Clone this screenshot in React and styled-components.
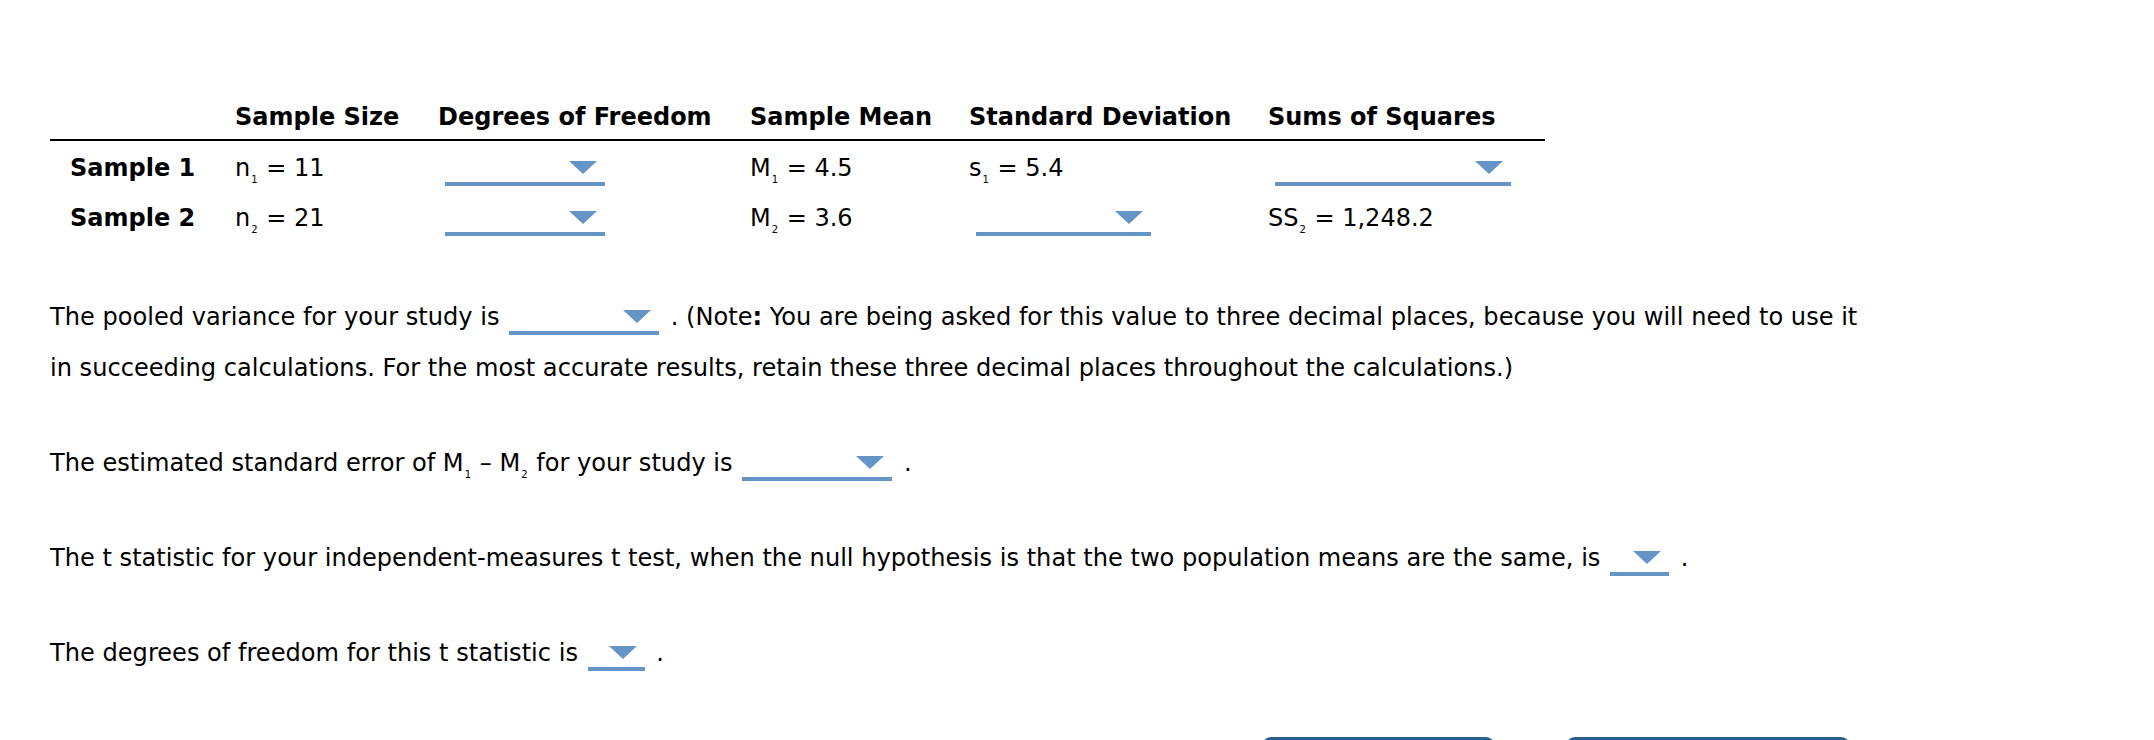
import React from "react";
import styled, { createGlobalStyle } from "styled-components";

const GlobalStyle = createGlobalStyle`
  html, body { margin: 0; padding: 0; background: #ffffff; }
  body {
    font-family: "DejaVu Sans", Verdana, sans-serif;
    font-size: 24px;
    color: #000000;
  }
`;

const Page = styled.div`
  width: 2154px;
  height: 740px;
  overflow: hidden;
  box-sizing: border-box;
  padding: 102px 0 0 50px;
`;

const Table = styled.div`
  display: grid;
  grid-template-columns: 185px 203px 312px 219px 299px 277px;
  width: 1495px;
`;

const HeadCell = styled.div`
  font-weight: bold;
  line-height: 30px;
  padding-bottom: 7px;
  border-bottom: 2px solid #000;
  margin-bottom: 2px;
  white-space: nowrap;
`;

const Cell = styled.div`
  height: 50px;
  display: flex;
  align-items: center;
  line-height: 30px;
  white-space: nowrap;
  font-weight: ${(p) => (p.$label ? "bold" : "normal")};
  padding-left: ${(p) => (p.$label ? "20px" : "0")};
`;

const Value = styled.span`
  display: block;
  line-height: 30px;
`;

const Sub = styled.span`
  font-size: 10px;
  vertical-align: -7px;
  margin: 0 1px 0 1px;
  line-height: 0;
`;

const Field = styled.span`
  display: inline-flex;
  justify-content: flex-end;
  align-items: flex-end;
  box-sizing: content-box;
  width: ${(p) => p.$w - 8}px;
  height: 24px;
  padding: 0 8px 8px 0;
  border-bottom: 4px solid #6594c6;
  vertical-align: 2px;
  margin: ${(p) => (p.$inTable ? "0 0 0 7px" : "0 4px 0 2px")};
`;

const Caret = styled.svg`
  display: block;
  width: 28px;
  height: 13px;
  flex: none;
`;

const Dropdown = ({ w, inTable }) => (
  <Field $w={w} $inTable={inTable}>
    <Caret viewBox="0 0 28 13">
      <polygon points="0,0 28,0 14,13" fill="#6594c6" />
    </Caret>
  </Field>
);

const Para = styled.p`
  margin: ${(p) => (p.$first ? "49px" : "44px")} 0 0 0;
  line-height: 51px;
  white-space: nowrap;
  font-size: 24.1px;
`;

const Colon = styled.b`
  font-weight: bold;
`;

const ButtonBar = styled.div`
  display: flex;
  gap: 71px;
  margin-top: 58px;
  padding-left: 1212px;
`;

const Button = styled.button`
  width: ${(p) => p.$w}px;
  height: 48px;
  border: none;
  border-radius: 9px;
  background: #26628f;
  flex: none;
  padding: 0;
`;

const Var = ({ name, sub }) => (
  <>
    {name}
    <Sub>{sub}</Sub>
  </>
);

export default function App() {
  return (
    <>
      <GlobalStyle />
      <Page>
        <Table>
          <HeadCell />
          <HeadCell>Sample Size</HeadCell>
          <HeadCell>Degrees of Freedom</HeadCell>
          <HeadCell>Sample Mean</HeadCell>
          <HeadCell>Standard Deviation</HeadCell>
          <HeadCell>Sums of Squares</HeadCell>

          <Cell $label>Sample 1</Cell>
          <Cell>
            <Value>
              <Var name="n" sub="1" /> = 11
            </Value>
          </Cell>
          <Cell>
            <Dropdown w={160} inTable />
          </Cell>
          <Cell>
            <Value>
              <Var name="M" sub="1" /> = 4.5
            </Value>
          </Cell>
          <Cell>
            <Value>
              <Var name="s" sub="1" /> = 5.4
            </Value>
          </Cell>
          <Cell>
            <Dropdown w={236} inTable />
          </Cell>

          <Cell $label>Sample 2</Cell>
          <Cell>
            <Value>
              <Var name="n" sub="2" /> = 21
            </Value>
          </Cell>
          <Cell>
            <Dropdown w={160} inTable />
          </Cell>
          <Cell>
            <Value>
              <Var name="M" sub="2" /> = 3.6
            </Value>
          </Cell>
          <Cell>
            <Dropdown w={175} inTable />
          </Cell>
          <Cell>
            <Value>
              <Var name="SS" sub="2" /> = 1,248.2
            </Value>
          </Cell>
        </Table>

        <Para $first>
          The pooled variance for your study is <Dropdown w={150} /> . (Note
          <Colon>:</Colon> You are being asked for this value to three decimal
          places, because you will need to use it
          <br />
          in succeeding calculations. For the most accurate results, retain
          these three decimal places throughout the calculations.)
        </Para>

        <Para>
          The estimated standard error of <Var name="M" sub="1" /> –{" "}
          <Var name="M" sub="2" /> for your study is <Dropdown w={150} /> .
        </Para>

        <Para>
          The t statistic for your independent-measures t test, when the null
          hypothesis is that the two population means are the same, is{" "}
          <Dropdown w={59} /> .
        </Para>

        <Para>
          The degrees of freedom for this t statistic is <Dropdown w={57} /> .
        </Para>

        <ButtonBar>
          <Button $w={233} aria-label="Grade It Now" />
          <Button $w={284} aria-label="Save and Continue" />
        </ButtonBar>
      </Page>
    </>
  );
}
